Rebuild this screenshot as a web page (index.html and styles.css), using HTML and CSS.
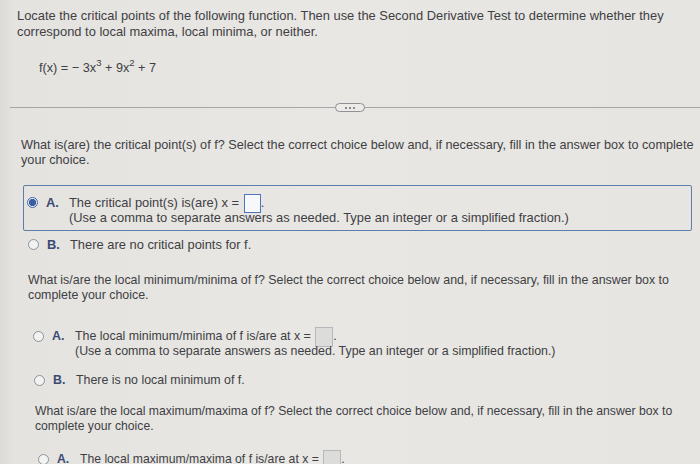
FILE: index.html
```html
<!DOCTYPE html>
<html lang="en">
<head>
  <meta charset="UTF-8">
  <title>Critical points</title>
  <link rel="stylesheet" href="styles.css">
</head>
<body>
  <div class="page">
    <p class="intro">Locate the critical points of the following function. Then use the Second Derivative Test to determine whether they correspond to local maxima, local minima, or neither.</p>
    <p class="formula">f(x) = &minus; 3x<sup>3</sup> + 9x<sup>2</sup> + 7</p>

    <div class="divider"><span class="pill"><i></i><i></i><i></i></span></div>

    <div class="question q1">
      <p class="prompt">What is(are) the critical point(s) of f? Select the correct choice below and, if necessary, fill in the answer box to complete your choice.</p>
      <div class="choice selected">
        <span class="radio on"></span><b class="letter">A.</b>
        <div class="body">
          <div>The critical point(s) is(are) x = <span class="answer active"></span>.</div>
          <div class="hint">(Use a comma to separate answers as needed. Type an integer or a simplified fraction.)</div>
        </div>
      </div>
      <div class="choice opt-b">
        <span class="radio"></span><b class="letter">B.</b>
        <div class="body">There are no critical points for f.</div>
      </div>
    </div>

    <div class="question q2">
      <p class="prompt">What is/are the local minimum/minima of f? Select the correct choice below and, if necessary, fill in the answer box to complete your choice.</p>
      <div class="choice opt-a">
        <span class="radio"></span><b class="letter">A.</b>
        <div class="body">
          <div>The local minimum/minima of f is/are at x = <span class="answer"></span>.</div>
          <div class="hint">(Use a comma to separate answers as needed. Type an integer or a simplified fraction.)</div>
        </div>
      </div>
      <div class="choice opt-b">
        <span class="radio"></span><b class="letter">B.</b>
        <div class="body">There is no local minimum of f.</div>
      </div>
    </div>

    <div class="question q3">
      <p class="prompt">What is/are the local maximum/maxima of f? Select the correct choice below and, if necessary, fill in the answer box to complete your choice.</p>
      <div class="choice opt-a">
        <span class="radio"></span><b class="letter">A.</b>
        <div class="body">
          <div>The local maximum/maxima of f is/are at x = <span class="answer"></span>.</div>
        </div>
      </div>
    </div>
  </div>
</body>
</html>
```

FILE: styles.css
```css
html, body { margin: 0; height: 100%; overflow: hidden; }
body {
  background: linear-gradient(90deg, #dcdbd7 0, #e4e3df 14px, #e8e7e3 45%, #e6e5e1 100%);
  font-family: "Liberation Sans", Arial, sans-serif;
  font-size: 12.7px;
  line-height: 15px;
  color: #404044;
}
p { margin: 0; }
.page { padding-top: 8px; }

.intro { margin-left: 17px; font-size: 12.9px; line-height: 16px; }
.formula { margin: 21px 0 0 39px; }
.formula sup { font-size: 9.5px; line-height: 0; vertical-align: 6px; }

.divider {
  position: relative;
  margin: 31px 0 0 10px;
  height: 1px;
  background: #a4a5a8;
}
.pill {
  position: absolute;
  left: 325px;
  top: -4px;
  width: 28px;
  height: 7px;
  border: 1px solid #8e9094;
  border-radius: 5px;
  background: #ecebe8;
  display: flex;
  justify-content: center;
  align-items: center;
  gap: 2px;
}
.pill i { width: 2px; height: 2px; background: #6a6d74; border-radius: 1px; }

.q1 { margin: 30px 0 0 21px; }
.q1 .choice { font-size: 12.9px; }
.q2 { margin: 21px 0 0 28px; font-size: 12.4px; }
.q3 { margin: 16px 0 0 35px; font-size: 12.2px; }

.choice { display: flex; align-items: flex-start; }
.choice.selected {
  margin: 17px 8px 0 2px;
  padding: 9px 0 5px 3px;
  border: 1.5px solid #5d7dad;
  border-radius: 2px;
}
.q1 .opt-b { margin-top: 6px; padding-left: 7px; }
.q2 .opt-a { margin-top: 26px; padding-left: 5px; }
.q2 .opt-b { margin-top: 14px; padding-left: 6px; }
.q3 .opt-a { margin-top: 18px; padding-left: 3px; }

.radio {
  flex: none;
  width: 9px;
  height: 9px;
  margin-top: 2px;
  border: 1px solid #8c929c;
  border-radius: 50%;
  background: #f2f2f1;
}
.radio.on {
  border: 1.5px solid #4467a8;
  background: radial-gradient(circle, #3b5ea0 0 3.3px, #e7ecf5 3.9px);
}
.letter {
  flex: none;
  width: 23px;
  margin-left: 8px;
  color: #3b4a74;
  font-weight: bold;
}

.answer {
  display: inline-block;
  width: 16px;
  height: 18px;
  margin: -4px 0 -4px 1px;
  vertical-align: middle;
  border: 1px solid #b6b8bb;
  background: #dcdcdb;
}
.answer.active {
  border: 1.5px solid #4d75bb;
  background: #f7f8fa;
  width: 15px;
  height: 17px;
}
```
